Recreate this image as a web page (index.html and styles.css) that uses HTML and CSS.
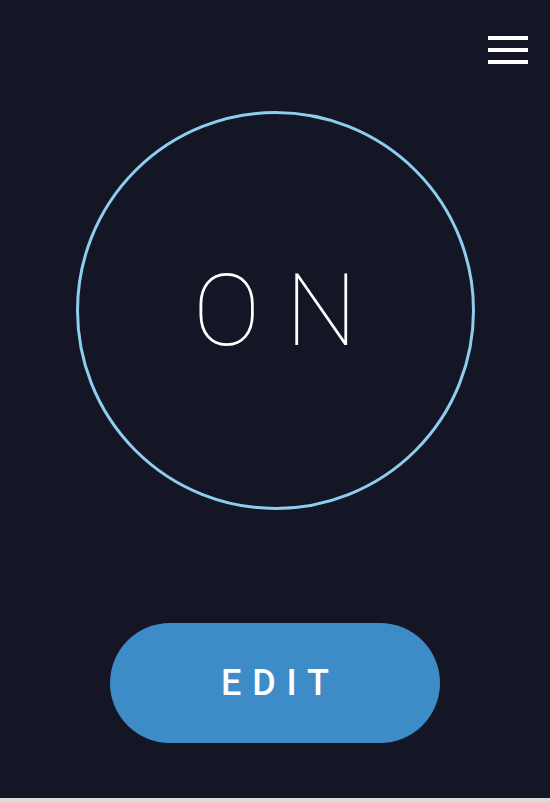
FILE: index.html
```html
<!DOCTYPE html>
<html lang="en">
<head>
  <meta charset="UTF-8">
  <meta name="viewport" content="width=device-width, initial-scale=1.0">
  <title>Switch</title>
  <link rel="stylesheet" href="styles.css">
</head>
<body>
  <div class="app">
    <header class="topbar">
      <button class="menu" aria-label="Menu">
        <span></span>
        <span></span>
        <span></span>
      </button>
    </header>

    <div class="status">
      <div class="ring">
        <span class="state">ON</span>
      </div>
    </div>

    <div class="actions">
      <button class="edit">EDIT</button>
    </div>
  </div>
</body>
</html>
```

FILE: styles.css
```css
body {
  margin: 0;
  background: #dcdcdc;
  font-family: Roboto, "Liberation Sans", sans-serif;
}
.app {
  height: 798px;
  background: #141626;
  display: flex;
  flex-direction: column;
}
.topbar {
  display: flex;
  justify-content: flex-end;
  padding: 36px 22px 0 0;
}
.menu {
  display: flex;
  flex-direction: column;
  gap: 8px;
  width: 40px;
  padding: 0;
  background: none;
  border: none;
  cursor: pointer;
}
.menu span {
  display: block;
  height: 4px;
  background: #fff;
}
.status {
  display: flex;
  justify-content: center;
  margin-top: 47px;
}
.ring {
  width: 393px;
  height: 393px;
  border: 3px solid #8dcdee;
  border-radius: 50%;
  display: flex;
  align-items: center;
  justify-content: center;
}
.state {
  color: #fff;
  font-size: 101px;
  font-weight: 100;
  letter-spacing: 0.25em;
  margin-right: -0.25em;
}
.actions {
  display: flex;
  justify-content: center;
  margin-top: 113px;
}
.edit {
  width: 330px;
  height: 120px;
  border: none;
  border-radius: 60px;
  background: #3d8cc8;
  color: #fff;
  font-family: Roboto, "Liberation Sans", sans-serif;
  font-size: 36px;
  font-weight: 500;
  letter-spacing: 0.3em;
  padding: 0 0 0 0.3em;
  cursor: pointer;
}
```
